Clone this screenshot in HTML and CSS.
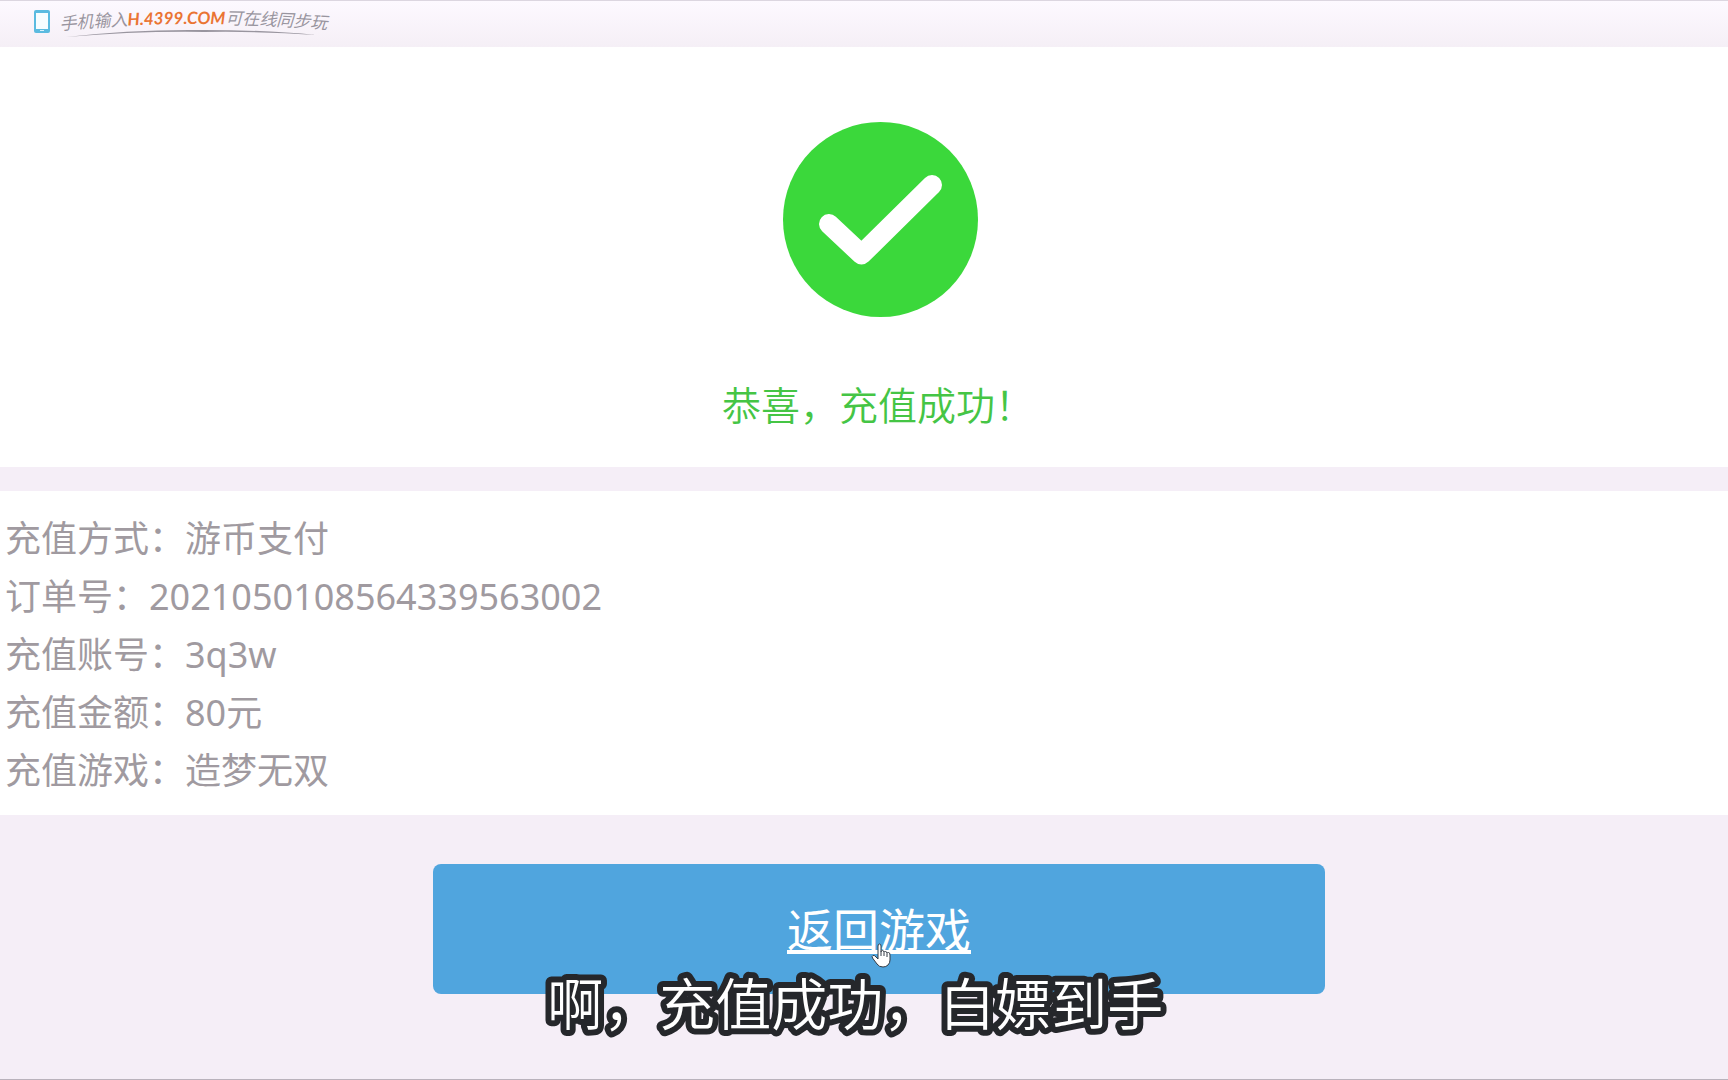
FILE: index.html
```html
<!DOCTYPE html>
<html lang="zh-CN">
<head>
  <meta charset="UTF-8" />
  <title>充值成功</title>
  <link rel="stylesheet" href="styles.css">
</head>
<body>
  <header class="topbar">
    <svg class="phone" viewBox="0 0 16 23" aria-hidden="true">
      <rect x="0" y="0" width="16" height="23" rx="2" fill="#5bbbe0" />
      <rect x="2" y="3" width="12" height="16" fill="#f7fdff" />
      <rect x="6" y="20" width="4" height="1" fill="#d8f3fc" />
    </svg>
    <svg class="slogan" viewBox="0 0 280 40">
      <path id="arc" d="M2 28 Q70 22 140 22 Q210 22 280 28" fill="none" />
      <text class="slogan-text"><textPath href="#arc">手机输入<tspan class="slogan-url">H.4399.COM</tspan>可在线同步玩</textPath></text>
      <path d="M8 35 Q76 27 146 28 Q210 28 258 33 Q200 29 146 30 Q80 29 8 35 Z" fill="#99959f" />
    </svg>
  </header>

  <main>
    <section class="result">
      <svg class="result-icon" viewBox="0 0 195 195" aria-hidden="true">
        <circle cx="97.5" cy="97.5" r="97.5" fill="#3bd83b" />
        <path d="M46 102 L78.5 132.5 L149 63" fill="none" stroke="#fff" stroke-width="20" stroke-linecap="round" stroke-linejoin="round" />
      </svg>
      <h1>恭喜，充值成功！</h1>
    </section>

    <section class="details">
      <p>充值方式：游币支付</p>
      <p>订单号：2021050108564339563002</p>
      <p>充值账号：3q3w</p>
      <p>充值金额：80元</p>
      <p>充值游戏：造梦无双</p>
    </section>

    <div class="actions">
      <a class="back" href="#">返回游戏</a>
      <svg class="pointer" viewBox="0 0 20 25" aria-hidden="true">
        <path d="M7 14 V3 Q7 1 8.500 1 Q10 1 10 3 V9 Q10 7.500 11.500 7.500 Q13 7.500 13 9.500 Q13 8.500 14.500 8.500 Q16 8.500 16 10.500 Q16 9.500 17.500 9.500 Q19 9.500 19 12 V17 Q19 20 17 22 Q15 24 12 24 Q8 24 6 21 L1.500 15 Q0.500 13 2 12.500 Q3.500 12 5 14 L7 16 Z" fill="#fff" stroke="#333b44" stroke-width="1" />
        <path d="M10 9 V13 M13 10 V13 M16 11 V14" fill="none" stroke="#333b44" stroke-width="1" />
      </svg>
      <svg class="caption">
        <text x="50%" y="62">啊，充值成功，白嫖到手</text>
      </svg>
    </div>
  </main>
</body>
</html>
```

FILE: styles.css
```css
* {
  box-sizing: border-box;
}
body {
  margin: 0;
  min-height: 100vh;
  background-color: #f5eef7;
  border-top: 1px solid #dcd6e0;
  border-bottom: 1px solid #b9b2bc;
  font-family: "Noto Sans", "Noto Sans CJK SC", sans-serif;
}
h1, p {
  margin: 0;
}
.topbar {
  height: 46px;
  padding: 0 0 5px 34px;
  display: flex;
  align-items: center;
  gap: 8px;
  background: linear-gradient(#fdf9ff, #f5eff6);
}
.phone {
  width: 16px;
  height: 23px;
}
.slogan {
  width: 280px;
  height: 40px;
}
.slogan-text {
  font-family: Lato, "Noto Sans CJK SC", sans-serif;
  font-size: 17px;
  font-style: italic;
  font-weight: 400;
  fill: #99959f;
}
.slogan-url {
  fill: #ea7433;
  font-weight: 700;
}
.result {
  padding: 75px 0 33px;
  background-color: #fff;
  display: flex;
  flex-direction: column;
  align-items: center;
  gap: 59px;
}
.result-icon {
  width: 195px;
  height: 195px;
  margin-left: 32px;
}
.result h1 {
  margin-left: 28px;
  font-size: 39px;
  font-weight: 350;
  line-height: 58px;
  color: #45c545;
}
.details {
  margin-top: 24px;
  padding: 19px 5px 15px;
  background-color: #fff;
  color: #a09aa0;
  font-size: 36px;
  line-height: 58px;
}
.actions {
  position: relative;
  padding: 49px 0 0 30px;
}
.back {
  display: block;
  width: 52.5%;
  margin: 0 auto;
  border-radius: 8px;
  background-color: #50a5de;
  color: #fff;
  font-size: 46px;
  line-height: 130px;
  text-align: center;
  text-decoration: underline;
  text-decoration-thickness: 4px;
  text-decoration-skip-ink: none;
  text-underline-offset: 3px;
}
.pointer {
  position: absolute;
  top: 128px;
  left: calc(50% + 7px);
  width: 20px;
  height: 25px;
}
.caption {
  position: absolute;
  top: 148px;
  left: 0;
  width: 99%;
  height: 90px;
}
.caption text {
  fill: #fff;
  stroke: #25272b;
  stroke-width: 12px;
  stroke-linejoin: round;
  paint-order: stroke;
  text-anchor: middle;
  font-size: 56px;
  font-weight: 350;
}
```
